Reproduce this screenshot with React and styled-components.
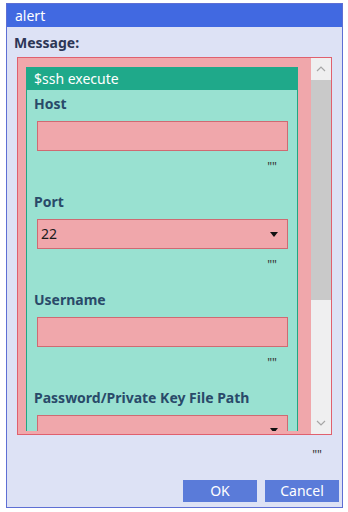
import React from "react";
import styled, { createGlobalStyle } from "styled-components";

const Global = createGlobalStyle`
  html, body { margin: 0; padding: 0; background: #ffffff; }
  body { font-family: "Noto Sans", "Open Sans", sans-serif; }
  * { box-sizing: border-box; }
`;

const Dialog = styled.div`
  margin: 3px 0 0 6px;
  width: 337px;
  height: 505px;
  border: 1px solid #5e6fd4;
  background: #dde2f5;
  display: flex;
  flex-direction: column;
`;

const TitleBar = styled.div`
  height: 23px;
  background: #4169e1;
  color: #ffffff;
  font-size: 14px;
  line-height: 23px;
  padding-left: 8px;
`;

const MessageLabel = styled.div`
  height: 30px;
  padding: 8px 0 0 7px;
  font-size: 14px;
  font-weight: 700;
  line-height: 16px;
  color: #2d3656;
`;

const RedBox = styled.div`
  margin-left: 10px;
  width: 315px;
  height: 378px;
  border: 1px solid #e0606e;
  background: #f0a7ab;
  display: flex;
`;

const Viewport = styled.div`
  flex: 1;
  overflow: hidden;
  padding: 9px 0 0 8px;
  margin-bottom: 3px;
`;

const Panel = styled.div`
  width: 272px;
  border: 1px solid #22a684;
  border-top: none;
  background: #99e1d1;
  padding-bottom: 20px;
`;

const PanelHeader = styled.div`
  height: 23px;
  background: #1fa98a;
  color: #ffffff;
  font-size: 14px;
  line-height: 23px;
  padding-left: 8px;
  margin: 0 -1px;
`;

const Fields = styled.div`
  padding: 4px 0 0 7px;
`;

const Field = styled.div`
  display: flex;
  flex-direction: column;
  margin-bottom: 17px;
`;

const Label = styled.div`
  font-size: 14px;
  font-weight: 700;
  line-height: 20px;
  color: #294a69;
`;

const Input = styled.div`
  position: relative;
  margin: 7px 0 0 3px;
  width: 251px;
  height: 30px;
  border: 1px solid #cf6a72;
  background: #f0a7ab;
  font-size: 14px;
  line-height: 28px;
  padding-left: 3px;
  color: #1a1a1a;
`;

const Caret = styled.span`
  position: absolute;
  right: 9px;
  top: 12px;
  width: 0;
  height: 0;
  border-left: 4.5px solid transparent;
  border-right: 4.5px solid transparent;
  border-top: 5px solid #111111;
`;

const Quote = styled.div`
  margin-top: 8px;
  height: 16px;
  font-size: 12px;
  line-height: 16px;
  color: #333333;
  text-align: right;
  padding-right: 20px;
`;

const ScrollBar = styled.div`
  width: 20px;
  display: flex;
  flex-direction: column;
  background: #efeff0;
`;

const ArrowBox = styled.div`
  height: 22px;
  display: flex;
  align-items: center;
  justify-content: center;
`;

const Thumb = styled.div`
  height: 220px;
  background: #c9c9c9;
`;

const Track = styled.div`
  flex: 1;
`;

const Footer = styled.div`
  flex: 1;
  display: flex;
  flex-direction: column;
`;

const FooterQuote = styled.div`
  margin-top: 12px;
  height: 16px;
  font-size: 12px;
  line-height: 16px;
  color: #333333;
  text-align: right;
  padding-right: 20px;
`;

const Buttons = styled.div`
  margin-top: 17px;
  display: flex;
  justify-content: flex-end;
  gap: 8px;
  padding-right: 3px;
`;

const Button = styled.button`
  width: 74px;
  height: 22px;
  border: none;
  background: #5a7bd9;
  color: #ffffff;
  font-family: inherit;
  font-size: 14px;
  line-height: 22px;
  padding: 0;
`;

const Chevron = ({ up }) => (
  <svg width="10" height="6" viewBox="0 0 10 6">
    <path
      d={up ? "M1 5 L5 1 L9 5" : "M1 1 L5 5 L9 1"}
      fill="none"
      stroke="#a6a6a6"
      strokeWidth="1.2"
    />
  </svg>
);

const fields = [
  { label: "Host", kind: "input", quote: true },
  { label: "Port", kind: "select", value: "22", quote: true },
  { label: "Username", kind: "input", quote: true },
  { label: "Password/Private Key File Path", kind: "select", quote: false },
];

export default function App() {
  return (
    <>
      <Global />
      <Dialog>
        <TitleBar>alert</TitleBar>
        <MessageLabel>Message:</MessageLabel>
        <RedBox>
          <Viewport>
            <Panel>
              <PanelHeader>$ssh execute</PanelHeader>
              <Fields>
                {fields.map((f) => (
                  <Field key={f.label}>
                    <Label>{f.label}</Label>
                    <Input>
                      {f.value}
                      {f.kind === "select" && <Caret />}
                    </Input>
                    {f.quote && <Quote>""</Quote>}
                  </Field>
                ))}
              </Fields>
            </Panel>
          </Viewport>
          <ScrollBar>
            <ArrowBox>
              <Chevron up />
            </ArrowBox>
            <Thumb />
            <Track />
            <ArrowBox>
              <Chevron />
            </ArrowBox>
          </ScrollBar>
        </RedBox>
        <Footer>
          <FooterQuote>""</FooterQuote>
          <Buttons>
            <Button>OK</Button>
            <Button>Cancel</Button>
          </Buttons>
        </Footer>
      </Dialog>
    </>
  );
}
